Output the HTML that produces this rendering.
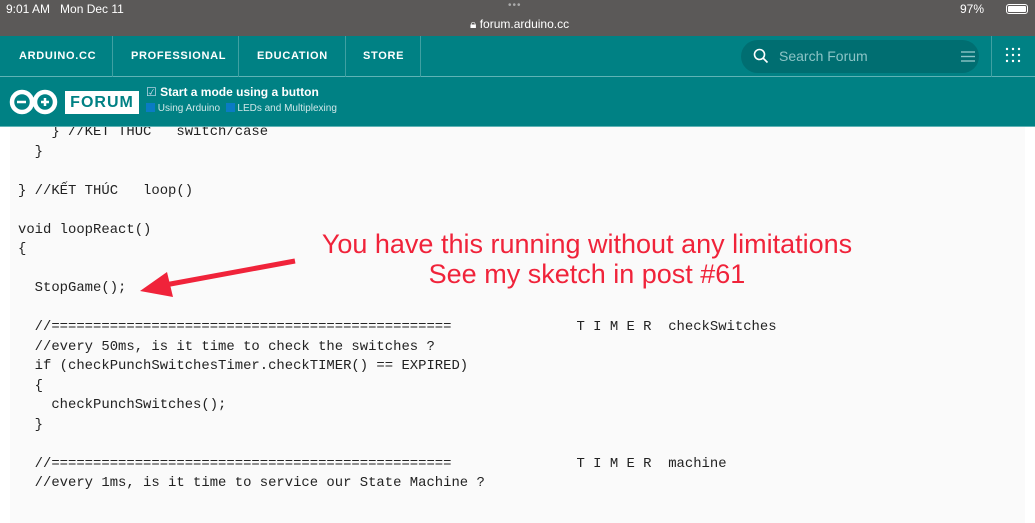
<!DOCTYPE html>
<html><head><meta charset="utf-8"><style>
*{margin:0;padding:0;box-sizing:border-box}
body{width:1035px;height:496px;overflow:hidden;background:#fff;font-family:"Liberation Sans",sans-serif;position:relative}
.status{position:absolute;left:0;top:0;width:1035px;height:36px;background:#5b5958;color:#fff}
.nav{position:absolute;left:0;top:36px;width:1035px;height:41px;background:#008184;border-bottom:1px solid #5fb3b5}
.nav .it{position:absolute;top:0;height:41px;line-height:40px;color:#fff;font-weight:bold;font-size:11px;letter-spacing:0.7px}
.sep{position:absolute;top:0;width:1px;height:41px;background:#3fa0a2}
.sub{position:absolute;left:0;top:77px;width:1035px;height:50px;background:#008184;border-bottom:1px solid #5fb3b5;z-index:2}
.code{position:absolute;left:10px;top:123px;width:1015px;height:400px;background:#fafafa;font-family:"Liberation Mono",monospace;font-size:13.9px;line-height:19.5px;color:#222;white-space:pre;padding-left:8px}
.red{position:absolute;color:#f0233a;font-size:27px;text-align:center;width:640px;left:267px;line-height:30px}
</style></head><body>
<div class="status">
 <div style="position:absolute;left:6px;top:2px;font-size:12px">9:01 AM&nbsp;&nbsp;&nbsp;Mon Dec 11</div>
 <div style="position:absolute;left:508px;top:0;font-size:10px;color:#aaa;letter-spacing:1px">•••</div>
 <div style="position:absolute;left:470px;top:17px;font-size:12px">&#128274;&#xFE0E; forum.arduino.cc</div>
 <div style="position:absolute;left:960px;top:2px;font-size:12px">97%</div>
 <div style="position:absolute;left:1006px;top:4px;width:22px;height:10px;border:1px solid #fff;border-radius:3px;padding:1px"><div style="background:#fff;width:100%;height:100%;border-radius:1px"></div></div>
</div>
<div class="nav">
 <div class="it" style="left:19px">ARDUINO.CC</div>
 <div class="sep" style="left:112px"></div>
 <div class="it" style="left:131px">PROFESSIONAL</div>
 <div class="sep" style="left:238px"></div>
 <div class="it" style="left:257px">EDUCATION</div>
 <div class="sep" style="left:345px"></div>
 <div class="it" style="left:363px">STORE</div>
 <div class="sep" style="left:420px"></div>
 <div style="position:absolute;left:741px;top:4px;width:238px;height:33px;border-radius:17px;background:#006e71">
  <svg style="position:absolute;left:12px;top:8px" width="16" height="16" viewBox="0 0 16 16"><circle cx="6.5" cy="6.5" r="5" fill="none" stroke="#fff" stroke-width="1.6"/><line x1="10" y1="10" x2="14.5" y2="14.5" stroke="#fff" stroke-width="1.6"/></svg>
  <div style="position:absolute;left:38px;top:8px;color:#8cc4c6;font-size:14px">Search Forum</div>
  <svg style="position:absolute;left:220px;top:10px" width="14" height="13"><g stroke="#8cc4c6" stroke-width="1.4"><line x1="0" y1="2" x2="14" y2="2"/><line x1="0" y1="6.5" x2="14" y2="6.5"/><line x1="0" y1="11" x2="14" y2="11"/></g></svg>
 </div>
 <div class="sep" style="left:991px"></div>
 <svg style="position:absolute;left:1005px;top:11px" width="16" height="16"><g fill="#fff"><circle cx="2" cy="2" r="1.2"/><circle cx="8" cy="2" r="1.2"/><circle cx="14" cy="2" r="1.2"/><circle cx="2" cy="8" r="1.2"/><circle cx="8" cy="8" r="1.2"/><circle cx="14" cy="8" r="1.2"/><circle cx="2" cy="14" r="1.2"/><circle cx="8" cy="14" r="1.2"/><circle cx="14" cy="14" r="1.2"/></g></svg>
</div>
<div class="sub">
 <svg style="position:absolute;left:9px;top:12px" width="50" height="26" viewBox="0 0 50 26"><g fill="none" stroke="#fff" stroke-width="4.5"><circle cx="13" cy="13" r="10"/><circle cx="36" cy="13" r="10"/></g><g stroke="#fff" stroke-width="2.5"><line x1="8" y1="13" x2="17" y2="13"/><line x1="32" y1="13" x2="40" y2="13"/><line x1="36" y1="9" x2="36" y2="17"/></g></svg>
 <div style="position:absolute;left:65px;top:14px;width:74px;height:23px;background:#fff;color:#008184;font-weight:bold;font-size:16px;line-height:23px;text-align:center;letter-spacing:1px">FORUM</div>
 <div style="position:absolute;left:146px;top:8px;color:#fff;font-weight:bold;font-size:12px"><span style="font-weight:normal;color:#cde">&#9745;</span> Start a mode using a button</div>
 <div style="position:absolute;left:146px;top:26px;color:#cfe7e8;font-size:10px"><span style="display:inline-block;width:9px;height:9px;background:#0a7bc4;vertical-align:-1px"></span> Using Arduino &nbsp;<span style="display:inline-block;width:9px;height:9px;background:#0a7bc4;vertical-align:-1px"></span> LEDs and Multiplexing</div>
</div>
<div class="code">    } //KẾT THÚC   switch/case
  }

} //KẾT THÚC   loop()

void loopReact()
{

  StopGame();

  //================================================               T I M E R  checkSwitches
  //every 50ms, is it time to check the switches ?
  if (checkPunchSwitchesTimer.checkTIMER() == EXPIRED)
  {
    checkPunchSwitches();
  }

  //================================================               T I M E R  machine
  //every 1ms, is it time to service our State Machine ?</div>
<div class="red" style="top:229px">You have this running without any limitations<br>See my sketch in post #61</div>
<svg style="position:absolute;left:0;top:0" width="1035" height="496"><line x1="295" y1="261" x2="165" y2="285" stroke="#f0233a" stroke-width="5"/><polygon points="140,291 167,272 173,297" fill="#f0233a"/></svg>
</body></html>
